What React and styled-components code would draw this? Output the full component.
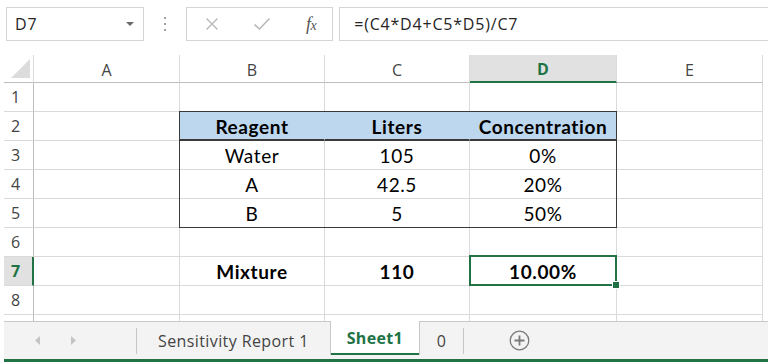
import React from 'react';
import styled, { createGlobalStyle } from 'styled-components';

const Global = createGlobalStyle`
  html, body { margin: 0; padding: 0; background: #fff; overflow: hidden; }
  #root { width: 768px; height: 363px; }
`;

const GREEN = '#217346';
const GRID = '#dadada';
const HEAD_LINE = '#bdbdbd';

const Window = styled.div`
  width: 768px;
  height: 363px;
  background: #fff;
  display: flex;
  flex-direction: column;
  overflow: hidden;
  font-family: "Open Sans", "Noto Sans", sans-serif;
`;

const FormulaRow = styled.div`
  display: flex;
  align-items: center;
  height: 34px;
  margin-top: 7px;
  margin-bottom: 14px;
  padding-left: 6px;
`;

const NameBox = styled.div`
  box-sizing: border-box;
  width: 138px;
  height: 34px;
  border: 1px solid #d4d4d4;
  display: flex;
  align-items: center;
  justify-content: space-between;
  padding: 0 9px 0 8px;
  font-size: 16px;
  letter-spacing: 0.8px;
  color: #262626;
`;

const DropArrow = styled.span`
  width: 0;
  height: 0;
  border-left: 4px solid transparent;
  border-right: 4px solid transparent;
  border-top: 4px solid #6a6a6a;
`;

const Dots = styled.div`
  width: 42px;
  display: flex;
  flex-direction: column;
  align-items: center;
  gap: 4px;
  & > span {
    width: 2px;
    height: 2px;
    background: #a0a0a0;
  }
`;

const ButtonBox = styled.div`
  box-sizing: border-box;
  width: 148px;
  height: 34px;
  border: 1px solid #d4d4d4;
  display: flex;
  align-items: center;
  justify-content: space-between;
  padding: 0 16px 0 18px;
`;

const FxText = styled.span`
  font-family: "Liberation Serif", "DejaVu Serif", serif;
  font-style: italic;
  font-size: 18px;
  color: #555;
  letter-spacing: -0.5px;
  & > small { font-size: 14px; }
`;

const FormulaBox = styled.div`
  box-sizing: border-box;
  margin-left: 6px;
  width: 430px;
  height: 34px;
  border: 1px solid #d4d4d4;
  border-right: none;
  display: flex;
  align-items: center;
  padding-left: 14px;
  font-size: 16px;
  letter-spacing: 0.8px;
  color: #262626;
`;

const Sheet = styled.div`
  margin-left: 4px;
  height: 266px;
  overflow: hidden;
  display: grid;
  grid-template-columns: 30px 146px 145px 145px 147px 146px;
  grid-template-rows: 28px repeat(9, 29px);
`;

const Cell = styled.div`
  box-sizing: border-box;
  grid-row: ${(p) => p.$r};
  grid-column: ${(p) => p.$c};
  border-right: 1px solid ${(p) => p.$fill || GRID};
  border-bottom: ${(p) => (p.$thick ? `2px solid #3a3a3a` : `1px solid ${GRID}`)};
  background: ${(p) => p.$fill || '#fff'};
  display: flex;
  align-items: flex-end;
  justify-content: center;
  padding-bottom: ${(p) => (p.$thick ? '1px' : '2px')};
  font-family: Lato, "Open Sans", sans-serif;
  font-size: 19px;
  letter-spacing: 0.6px;
  font-weight: ${(p) => (p.$bold ? 700 : 400)};
  color: #000;
`;

const ColHead = styled.div`
  box-sizing: border-box;
  grid-row: 1;
  grid-column: ${(p) => p.$c};
  border-right: 1px solid ${GRID};
  border-bottom: ${(p) => (p.$sel ? `2px solid ${GREEN}` : `1px solid ${HEAD_LINE}`)};
  background: ${(p) => (p.$sel ? '#e1e1e1' : '#fff')};
  color: ${(p) => (p.$sel ? GREEN : '#444')};
  font-weight: ${(p) => (p.$sel ? 700 : 400)};
  font-size: 16px;
  display: flex;
  align-items: center;
  justify-content: center;
  padding-top: 2px;
`;

const Corner = styled.div`
  box-sizing: border-box;
  grid-row: 1;
  grid-column: 1;
  border-right: 1px solid ${GRID};
  border-bottom: 1px solid ${HEAD_LINE};
  display: flex;
  align-items: flex-end;
  justify-content: flex-end;
  padding: 0 3px 4px 0;
`;

const RowHead = styled.div`
  box-sizing: border-box;
  grid-row: ${(p) => p.$r};
  grid-column: 1;
  border-right: ${(p) => (p.$sel ? `2px solid ${GREEN}` : `1px solid ${HEAD_LINE}`)};
  border-bottom: 1px solid ${GRID};
  background: ${(p) => (p.$sel ? '#e1e1e1' : '#fff')};
  color: ${(p) => (p.$sel ? GREEN : '#444')};
  font-weight: ${(p) => (p.$sel ? 700 : 400)};
  font-size: 16px;
  display: flex;
  align-items: center;
  padding-left: 7px;
`;

const TableFrame = styled.div`
  box-sizing: border-box;
  grid-row: 3 / 7;
  grid-column: 3 / 6;
  margin: -1px 0 0 -1px;
  border: 1px solid #3a3a3a;
  pointer-events: none;
`;

const Selection = styled.div`
  box-sizing: border-box;
  grid-row: 8;
  grid-column: 5;
  margin: -2px 0 0 -1px;
  border: 2px solid ${GREEN};
  position: relative;
  pointer-events: none;
`;

const FillHandle = styled.span`
  position: absolute;
  right: -5px;
  bottom: -5px;
  width: 6px;
  height: 6px;
  background: ${GREEN};
  border: 1px solid #fff;
`;

const TabBar = styled.div`
  box-sizing: border-box;
  margin-left: 4px;
  height: 41px;
  border-top: 1px solid #c8c8c8;
  border-bottom: 3px solid ${GREEN};
  background: #f3f3f3;
  display: flex;
  align-items: stretch;
`;

const Nav = styled.div`
  width: 132px;
  display: flex;
  align-items: center;
  padding-left: 31px;
  gap: 31px;
  box-sizing: border-box;
`;

const Sep = styled.span`
  align-self: center;
  width: 1px;
  height: 26px;
  background: #c6c6c6;
`;

const Tab = styled.div`
  box-sizing: border-box;
  display: flex;
  align-items: center;
  padding: 0 ${(p) => p.$pad || 21}px;
  font-size: 16px;
  letter-spacing: ${(p) => (p.$active ? '0.3px' : '0.4px')};
  color: ${(p) => (p.$active ? GREEN : '#444')};
  font-weight: ${(p) => (p.$active ? 700 : 400)};
  background: ${(p) => (p.$active ? '#fff' : 'transparent')};
  border-left: ${(p) => (p.$active ? '1px solid #c8c8c8' : 'none')};
  border-right: ${(p) => (p.$active ? '1px solid #c8c8c8' : 'none')};
  margin-top: ${(p) => (p.$active ? '-1px' : '0')};
  box-shadow: ${(p) => (p.$active ? `inset 0 -2px 0 ${GREEN}` : 'none')};
  margin-bottom: ${(p) => (p.$active ? '4px' : '0')};
`;

const AddButton = styled.div`
  display: flex;
  align-items: center;
  margin-left: 45px;
`;

const cols = ['A', 'B', 'C', 'D', 'E'];

const data = {
  2: [null, { t: 'Reagent' }, { t: 'Liters' }, { t: 'Concentration' }, null],
  3: [null, { t: 'Water' }, { t: '105' }, { t: '0%' }, null],
  4: [null, { t: 'A' }, { t: '42.5' }, { t: '20%' }, null],
  5: [null, { t: 'B' }, { t: '5' }, { t: '50%' }, null],
  7: [null, { t: 'Mixture', b: true }, { t: '110', b: true }, { t: '10.00%', b: true }, null],
};

export default function App() {
  const rows = [1, 2, 3, 4, 5, 6, 7, 8, 9];
  return (
    <Window>
      <Global />
      <FormulaRow>
        <NameBox>
          D7
          <DropArrow />
        </NameBox>
        <Dots>
          <span />
          <span />
          <span />
        </Dots>
        <ButtonBox>
          <svg width="14" height="14" viewBox="0 0 14 14">
            <path d="M1.5 1.5 L12.5 12.5 M12.5 1.5 L1.5 12.5" stroke="#b8b8b8" strokeWidth="1.4" fill="none" />
          </svg>
          <svg width="18" height="14" viewBox="0 0 18 14">
            <path d="M1.5 7.5 L6.5 12 L16.5 1.5" stroke="#b8b8b8" strokeWidth="1.6" fill="none" />
          </svg>
          <FxText>
            f<small>x</small>
          </FxText>
        </ButtonBox>
        <FormulaBox>=(C4*D4+C5*D5)/C7</FormulaBox>
      </FormulaRow>

      <Sheet>
        <Corner>
          <svg width="19" height="19" viewBox="0 0 19 19">
            <polygon points="19,0 19,19 0,19" fill="#dcdcdc" />
          </svg>
        </Corner>
        {cols.map((c, i) => (
          <ColHead key={c} $c={i + 2} $sel={c === 'D'}>
            {c}
          </ColHead>
        ))}
        {rows.map((r) => (
          <React.Fragment key={r}>
            <RowHead $r={r + 1} $sel={r === 7}>
              {r < 9 ? r : ''}
            </RowHead>
            {cols.map((c, i) => {
              const d = data[r] && data[r][i];
              const isHead = r === 2 && i >= 1 && i <= 3;
              return (
                <Cell
                  key={c}
                  $r={r + 1}
                  $c={i + 2}
                  $fill={isHead ? '#bdd7ee' : undefined}
                  $thick={isHead}
                  $bold={isHead || (d && d.b)}
                >
                  {d ? d.t : ''}
                </Cell>
              );
            })}
          </React.Fragment>
        ))}
        <TableFrame />
        <Selection>
          <FillHandle />
        </Selection>
      </Sheet>

      <TabBar>
        <Nav>
          <svg width="5" height="9" viewBox="0 0 5 9">
            <polygon points="5,0 5,9 0,4.5" fill="#c4c4c4" />
          </svg>
          <svg width="5" height="9" viewBox="0 0 5 9">
            <polygon points="0,0 0,9 5,4.5" fill="#c4c4c4" />
          </svg>
        </Nav>
        <Sep />
        <Tab $pad={21}>Sensitivity Report 1</Tab>
        <Tab $active $pad={16}>Sheet1</Tab>
        <Tab $pad={17}>0</Tab>
        <Sep />
        <AddButton>
          <svg width="21" height="21" viewBox="0 0 21 21">
            <circle cx="10.5" cy="10.5" r="9.3" fill="none" stroke="#7a7a7a" strokeWidth="1.3" />
            <path d="M10.5 5.5 V15.5 M5.5 10.5 H15.5" stroke="#7a7a7a" strokeWidth="1.8" />
          </svg>
        </AddButton>
      </TabBar>
    </Window>
  );
}
